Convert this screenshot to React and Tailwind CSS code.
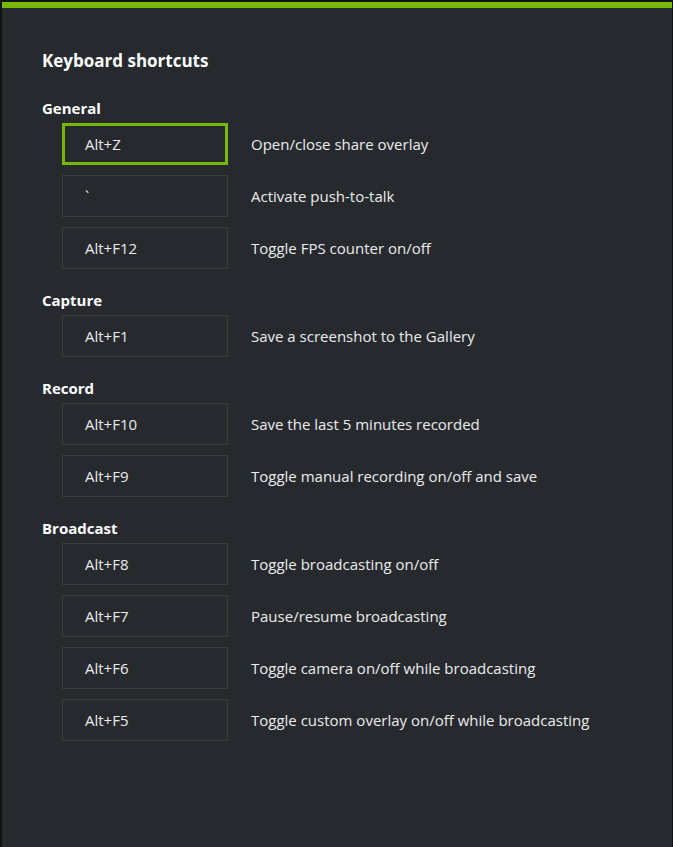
const sections = [
  {
    title: 'General',
    rows: [
      { key: 'Alt+Z', label: 'Open/close share overlay', active: true },
      { key: '`', label: 'Activate push-to-talk' },
      { key: 'Alt+F12', label: 'Toggle FPS counter on/off' },
    ],
  },
  {
    title: 'Capture',
    rows: [{ key: 'Alt+F1', label: 'Save a screenshot to the Gallery' }],
  },
  {
    title: 'Record',
    rows: [
      { key: 'Alt+F10', label: 'Save the last 5 minutes recorded' },
      { key: 'Alt+F9', label: 'Toggle manual recording on/off and save' },
    ],
  },
  {
    title: 'Broadcast',
    rows: [
      { key: 'Alt+F8', label: 'Toggle broadcasting on/off' },
      { key: 'Alt+F7', label: 'Pause/resume broadcasting' },
      { key: 'Alt+F6', label: 'Toggle camera on/off while broadcasting' },
      { key: 'Alt+F5', label: 'Toggle custom overlay on/off while broadcasting' },
    ],
  },
]

function ShortcutRow({ row }) {
  return (
    <div className="flex items-center">
      <div
        className={`w-[166px] h-[42px] flex items-center text-[15px] text-[#ececec] ${
          row.active ? 'border-[3px] border-[#76b900] pl-[20px]' : 'border border-[#3a3c3f] pl-[22px]'
        }`}
      >
        {row.key}
      </div>
      <div className="ml-[23px] text-[15px] text-[#ececec]">{row.label}</div>
    </div>
  )
}

export default function App() {
  return (
    <div className="w-[673px] h-[847px] bg-[#111213] pt-[2px] pl-[2px] pr-[1px]" style={{ fontFamily: '"Open Sans", "Noto Sans", sans-serif' }}>
      <div className="h-full bg-[#262a2f] flex flex-col">
        <div className="h-[6px] bg-[#76b900]" />
        <div className="pl-[40px] pt-[41px]">
          <h1 className="text-[17px] leading-[24px] font-bold text-white">Keyboard shortcuts</h1>
          <div className="mt-[25px] flex flex-col gap-[21px]">
            {sections.map((s) => (
              <div key={s.title}>
                <h2 className="text-[15px] leading-[20px] font-bold text-white">{s.title}</h2>
                <div className="mt-[5px] pl-[20px] flex flex-col gap-[10px]">
                  {s.rows.map((r) => (
                    <ShortcutRow key={r.key} row={r} />
                  ))}
                </div>
              </div>
            ))}
          </div>
        </div>
      </div>
    </div>
  )
}
